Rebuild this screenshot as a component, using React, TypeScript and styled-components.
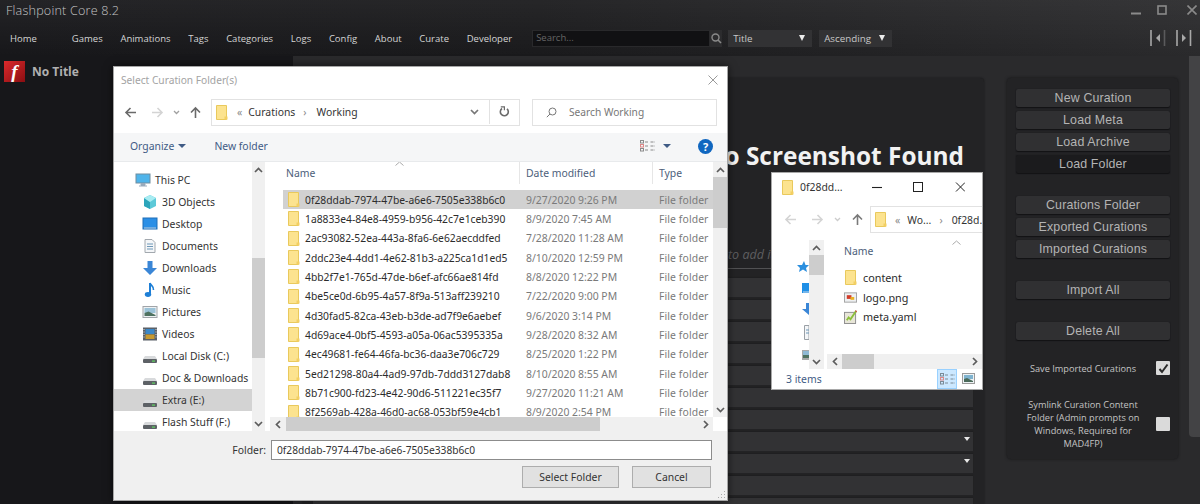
import React from "react";
import styled, { createGlobalStyle } from "styled-components";

const Global = createGlobalStyle`
  html, body { margin: 0; padding: 0; background: #1a1a1c; }
  * { box-sizing: border-box; }
`;
const UI = `"Open Sans", "Noto Sans", sans-serif`;
const WIN = `"Noto Sans", "Open Sans", sans-serif`;

const Page = styled.div`
  position: relative; width: 1200px; height: 504px; overflow: hidden;
  display: flex; flex-direction: column; background: #1a1a1c; font-family: ${UI};
`;
const Header = styled.header`
  height: 56px; flex: none; display: flex; flex-direction: column;
  background: linear-gradient(to bottom, rgba(255,255,255,.055), rgba(255,255,255,0)),
    linear-gradient(to right, #17171a 0%, #1a1a1c 45%, #2a2a2c 100%);
`;
const TitleBar = styled.div`display: flex; align-items: center; height: 20px; padding: 0 3px 0 6px;`;
const AppTitle = styled.div`font-size: 12.6px; font-weight: 300; color: #c4c4c4; letter-spacing: .2px; flex: 1;`;
const WinCtl = styled.svg<{ $ml: number }>`display: block; margin-left: ${p => p.$ml}px; color: #8a8a8a;`;
const NavBar = styled.nav`display: flex; align-items: center; height: 36px; padding: 0 8px 0 10px;`;
const NavLink = styled.a`
  font-size: 9.5px; color: #d4d4d4; margin-right: 17.7px;
  &:first-child { margin-right: 35px; }
  &:nth-last-of-type(1) { margin-right: 20px; }
`;
const SearchBox = styled.div`
  width: 178px; height: 17px; background: #111113; border: 1px solid #29292b;
  font-size: 9.5px; color: #666; padding-left: 3px; line-height: 14px;
`;
const SearchBtn = styled.div`width: 12px; height: 17px; background: #2c2c2e; display: flex; align-items: center; justify-content: center; margin-right: 6px;`;
const Select = styled.div<{ $w: number }>`
  width: ${p => p.$w}px; height: 17px; background: #323234; color: #c8c8c8; font-size: 9.8px;
  display: flex; align-items: center; justify-content: space-between; padding: 0 7px 0 5px; margin-right: 7px;
`;
const Arrow = styled.span`
  width: 0; height: 0; border-left: 3px solid transparent; border-right: 3px solid transparent;
  border-top: 6px solid #ececec; flex: none;
`;
const LayoutBtns = styled.div`margin-left: auto; display: flex; gap: 10px; margin-right: 0;`;
const Body = styled.div`flex: 1; display: flex; min-height: 0;`;
const Sidebar = styled.aside`width: 293px; flex: none; background: #17171a; padding: 5px 4px; display: block;`;
const SideHead = styled.div`display: flex; align-items: center; gap: 7px;`;
const FlashLogo = styled.div`
  width: 21px; height: 21px; background: linear-gradient(135deg, #dc2a2c, #8a0e12); color: #fff;
  display: flex; align-items: center; justify-content: center;
  font: italic bold 19px "Liberation Serif", serif; line-height: 21px;
`;
const SideTitle = styled.div`font-size: 12px; font-weight: 700; color: #b0b0b0;`;
const Content = styled.main`flex: 1; display: flex; background: #2a2a2c; padding-top: 22px; min-width: 0;`;
const Panel = styled.section`
  width: 681px; margin-left: 10px; margin-right: 23px; flex: none; background: #232325;
  border-radius: 4px 4px 0 0; box-shadow: 0 0 2px #151517; display: flex; flex-direction: column; padding: 0 11px 0 10px;
`;
const Shot = styled.div`height: 200px; flex: none; display: flex; flex-direction: column; align-items: flex-end;`;
const NoShot = styled.h2`
  margin: 58px 9px 0 0; font-size: 24.4px; line-height: 40px; font-weight: 700; color: #f2f2f2; white-space: nowrap; font-family: ${UI};
`;
const DropHint = styled.div`
  margin-top: 70px; width: 245px; font-size: 12.5px; font-style: italic; color: #5f5f61; line-height: 18px;
`;
const HintLine = styled.div`height: 1px; background: #515153; width: 100%; margin-top: 4px;`;
const Rows = styled.div`display: flex; flex-direction: column; gap: 3px;`;
const Row = styled.div`
  height: 19px; flex: none; background: #323234; box-shadow: 0 -1px 1px #1f1f21;
  display: flex; align-items: center; justify-content: flex-end; padding-right: 3px;
`;
const RowArrow = styled.span`
  width: 0; height: 0; border-left: 3px solid transparent; border-right: 3px solid transparent;
  border-top: 4px solid #e8e8e8; margin-bottom: 5px;
`;
const SidePanel = styled.section`
  width: 171px; height: 381px; flex: none; background: #232325; border-radius: 4px; box-shadow: 0 0 3px #141416;
  padding: 11px 8px 0 9px; display: flex; flex-direction: column;
`;
const SideBtn = styled.button<{ $dark?: boolean; $gap?: boolean }>`
  display: block; width: 154px; height: 18px; margin: ${p => (p.$gap ? "19px" : "0")} 0 4px; padding: 0; flex: none;
  border: 0; border-radius: 2px; background: ${p => (p.$dark ? "#1b1b1d" : "#303032")};
  box-shadow: 0 1px 1px #121214, 0 0 1px #17171a; color: #b4b4b4;
  font: 12.4px/18px "Liberation Sans", sans-serif; letter-spacing: .15px;
`;
const CheckRow = styled.div<{ $mt: number }>`display: flex; align-items: center; margin-top: ${p => p.$mt}px;`;
const CheckLabel = styled.div`
  width: 134px; margin-right: 6px; text-align: center; font-size: 9.2px; line-height: 13px; color: #c4c4c4; flex: none;
`;
const Check = styled.div`
  width: 14px; height: 14px; background: #dadada; border-radius: 1px; display: flex; align-items: center; justify-content: center;
`;
const PageScroll = styled.div`margin-left: 11px; width: 11px; height: 381px; margin-top: -22px; background: #434345; border-radius: 0 0 0 4px; flex: none;`;

/* windows */
const Dialog = styled.div`
  position: absolute; left: 113px; top: 66px; width: 615px; height: 435px; background: #fff;
  border: 1px solid #a6a6a6; display: flex; flex-direction: column; font-family: ${WIN}; box-shadow: 0 0 8px rgba(0,0,0,.6);
`;
const DlgTitle = styled.div`
  height: 28px; flex: none; display: flex; align-items: center; justify-content: space-between; padding: 0 9px 2px 7px;
  font-size: 10.2px; color: #a3a3a3;
`;
const AddrRow = styled.div`height: 38px; flex: none; display: flex; padding-top: 4px; padding-left: 10px;`;
const NavIcons = styled.div`width: 87px; flex: none; height: 27px; display: flex; align-items: center; gap: 0;`;
const AddrBox = styled.div<{ $w: number }>`
  width: ${p => p.$w}px; height: 27px; border: 1px solid #e2e2e2; display: flex; align-items: center; flex: none; font-size: 10.4px; color: #333; padding-bottom: 1px;
`;
const Crumb = styled.span<{ $ml?: number }>`margin-left: ${p => p.$ml ?? 0}px; white-space: nowrap;`;
const Faint = styled.span<{ $ml?: number }>`margin-left: ${p => p.$ml ?? 0}px; color: #8a8a8a; white-space: nowrap;`;
const AddrChevron = styled.div`margin-left: auto; padding-right: 10px; display: flex; align-items: center;`;
const AddrEnd = styled.div`width: 30px; height: 100%; border-left: 1px solid #e2e2e2; display: flex; align-items: center; justify-content: center;`;
const SearchField = styled.div`
  margin-left: 12px; width: 185px; height: 27px; border: 1px solid #e2e2e2; display: flex; align-items: center; padding-left: 13px; gap: 12px;
  font-size: 10.2px; color: #777; padding-bottom: 1px;
`;
const Tools = styled.div`
  height: 29px; flex: none; background: #f5f6f7; border-bottom: 1px solid #e8eaec; display: flex; align-items: center; padding: 0 14px 2px 16px;
  font-size: 10.4px; color: #3f5b85;
`;
const ToolCaret = styled.span<{ $ml: number; $color?: string }>`
  margin-left: ${p => p.$ml}px; width: 0; height: 0; border-left: 4px solid transparent; border-right: 4px solid transparent;
  border-top: 4px solid ${p => p.$color ?? "#3f5b85"};
`;
const NewFolder = styled.span`margin-left: 28px; flex: 1;`;
const Help = styled.div`
  margin-left: 27px; width: 15px; height: 15px; border-radius: 50%; background: #1067c0; color: #fff;
  font: 700 11px/15px ${WIN}; text-align: center;
`;
const Browser = styled.div`flex: 1; display: flex; min-height: 0;`;
const NavPane = styled.div`width: 138px; flex: none; padding-top: 7px; overflow: hidden;`;
const NavItem = styled.div<{ $active?: boolean; $top?: boolean }>`
  height: 22px; display: flex; align-items: center; padding-left: ${p => (p.$top ? 21 : 28)}px; gap: 4px;
  background: ${p => (p.$active ? "#d3d3d3" : "transparent")}; font-size: 10.4px; color: #333; white-space: nowrap;
`;
const VBar = styled.div<{ $w?: number }>`
  width: ${p => p.$w ?? 13}px; flex: none; background: #f0f0f0; display: flex; flex-direction: column; align-items: stretch; position: relative;
`;
const Thumb = styled.div<{ $h: number; $mt: number }>`height: ${p => p.$h}px; margin-top: ${p => p.$mt}px; background: #cdcdcd; flex: none;`;
const Chev = styled.svg`display: block; flex: none;`;
const ChevSlot = styled.div<{ $h?: number }>`height: ${p => p.$h ?? 15}px; display: flex; align-items: center; justify-content: center; flex: none;`;
const Push = styled.div`flex: 1;`;
const FilePane = styled.div`
  margin-left: 5px; flex: 1; display: grid; grid-template-columns: 1fr 14px; grid-template-rows: 1fr 14px; min-width: 0;
`;
const ListArea = styled.div`overflow: hidden; min-height: 0; padding-left: 13px;`;
const ColHead = styled.div`height: 28px; display: flex; font-size: 10.4px; color: #4c607a; position: relative;`;
const HeadCell = styled.div<{ $w?: number; $ml?: number; $line?: boolean }>`
  width: ${p => (p.$w ? `${p.$w}px` : "auto")}; padding-left: ${p => p.$ml ?? 0}px; line-height: 22px; height: 22px;
  border-right: ${p => (p.$line ? "1px solid #e6e6e6" : "0")};
`;
const SortCaret = styled.svg`position: absolute; left: 112px; top: -1px;`;
const FileRow = styled.div<{ $sel?: boolean }>`
  height: 19.33px; display: flex; align-items: center; background: ${p => (p.$sel ? "#d1d1d1" : "transparent")};
  font-size: 10.4px; color: #2c2c2c; white-space: nowrap;
`;
const FileName = styled.div`width: 243px; flex: none; display: flex; align-items: center; gap: 5px; padding-left: 5px; font-size: 10.3px;`;
const FileDate = styled.div`width: 133px; flex: none; color: #7a7a7a;`;
const FileType = styled.div`color: #7a7a7a; letter-spacing: .1px;`;
const HBar = styled.div<{ $h?: number }>`background: #f0f0f0; display: flex; align-items: center; height: ${p => p.$h ?? 14}px;`;
const HThumb = styled.div<{ $w: number; $ml?: number }>`height: 100%; width: ${p => p.$w}px; margin-left: ${p => p.$ml ?? 0}px; background: #cdcdcd; flex: none;`;
const Slot = styled.div<{ $w?: number }>`width: ${p => p.$w ?? 15}px; height: 14px; display: flex; align-items: center; justify-content: center; flex: none;`;
const Footer = styled.div`
  height: 69px; flex: none; background: #f0f0f0; padding-top: 9px; position: relative;
`;
const FolderRow = styled.div`display: flex; align-items: center; justify-content: flex-end; padding-right: 15px; gap: 5px; font-size: 10.4px; color: #333;`;
const FolderInput = styled.div`
  width: 441px; height: 20px; background: #fff; border: 1px solid #8c8c8c; font-size: 10.2px; line-height: 18px; padding-left: 5px; color: #333;
`;
const BtnRow = styled.div`display: flex; justify-content: flex-end; gap: 13px; padding-right: 16px; margin-top: 6px;`;
const WinBtn = styled.div<{ $w: number }>`
  width: ${p => p.$w}px; height: 22px; border: 1px solid #adadad; background: #e1e1e1; font-size: 10.4px; line-height: 20px; text-align: center; color: #333;
`;
const Grip = styled.svg`position: absolute; right: 1px; bottom: 1px;`;

const Explorer = styled.div`
  position: absolute; left: 771px; top: 172px; width: 212px; height: 218px; background: #fff; border: 1px solid #a8a8a8;
  display: flex; flex-direction: column; font-family: ${WIN}; overflow: hidden;
`;
const ExTitle = styled.div`height: 33px; flex: none; display: flex; align-items: center; padding: 0 0 5px 10px; font-size: 10.4px; color: #333; gap: 6px;`;
const ExTitleText = styled.span`flex: 1;`;
const ExNav = styled.div`height: 27px; flex: none; display: flex; align-items: center; padding-left: 12px;`;
const ExAddr = styled.div`
  margin-left: 6px; flex: 1; height: 27px; border: 1px solid #e2e2e2; border-right: 0; display: flex; align-items: center; padding-left: 4px; font-size: 10.4px; color: #333; white-space: nowrap; overflow: hidden;
`;
const ExBody = styled.div`flex: 1; display: flex; min-height: 0; padding-top: 7px;`;
const ExClip = styled.div`width: 37px; flex: none; overflow: hidden; display: flex; flex-direction: column; align-items: flex-end; padding-top: 21px; gap: 10px;`;
const ExFiles = styled.div`flex: 1; margin-left: 3px; display: flex; flex-direction: column; min-width: 0; position: relative;`;
const ExHead = styled.div`height: 28px; padding-left: 17px; padding-top: 2px; line-height: 18px; font-size: 10.4px; color: #4c607a;`;
const ExRow = styled.div`height: 19.5px; display: flex; align-items: center; gap: 6px; padding-left: 18px; font-size: 10.8px; color: #2c2c2c;`;
const ExCaret = styled.svg`position: absolute; top: 0; left: 125px;`;
const ExStatus = styled.div`height: 20px; flex: none; display: flex; align-items: center; padding: 0 0 1px 14px; font-size: 10.4px; color: #3f5b85;`;
const ViewBtn = styled.div<{ $on?: boolean }>`
  width: 20px; height: 20px; margin-left: ${p => (p.$on ? "auto" : "1px")}; margin-right: ${p => (p.$on ? "0" : "4px")};
  background: ${p => (p.$on ? "#cce8ff" : "transparent")}; border: 1px solid ${p => (p.$on ? "#99d1ff" : "transparent")};
  display: flex; align-items: center; justify-content: center;
`;

const Folder = ({ s = 1 }: { s?: number }) => (
  <svg width={12 * s} height={15 * s} viewBox="0 0 12 15" style={{ flex: "none", display: "block" }}>
    <path d="M.5.5H10.5V14.5H.5Z" fill="#fce38f" stroke="#e9c95c" />
    <path d="M8.5 11.5h3v3h-3z" fill="#f3cf62" />
  </svg>
);
const ChevronUp = ({ c = "#5c5c5c" }: { c?: string }) => (
  <Chev width="9" height="6" viewBox="0 0 9 6"><path d="M1 5 4.5 1.5 8 5" fill="none" stroke={c} strokeWidth="1.7" /></Chev>
);
const ChevronDown = ({ c = "#5c5c5c" }: { c?: string }) => (
  <Chev width="9" height="6" viewBox="0 0 9 6"><path d="M1 1 4.5 4.5 8 1" fill="none" stroke={c} strokeWidth="1.7" /></Chev>
);
const ChevronLeft = () => (
  <Chev width="6" height="9" viewBox="0 0 6 9"><path d="M5 1 1.5 4.5 5 8" fill="none" stroke="#5c5c5c" strokeWidth="1.7" /></Chev>
);
const ChevronRight = () => (
  <Chev width="6" height="9" viewBox="0 0 6 9"><path d="M1 1 4.5 4.5 1 8" fill="none" stroke="#5c5c5c" strokeWidth="1.7" /></Chev>
);
const NavArrow = ({ dir, c, ml = 0 }: { dir: "l" | "r" | "u"; c: string; ml?: number }) => {
  const d = dir === "l" ? "M12 6.5H2M6.5 2 2 6.5 6.5 11" : dir === "r" ? "M1 6.5H11M6.5 2 11 6.5 6.5 11" : "M6.5 12V2M2 6.5 6.5 2 11 6.5";
  return (
    <svg width="13" height="13" viewBox="0 0 13 13" style={{ marginLeft: ml, display: "block", flex: "none" }}>
      <path d={d} fill="none" stroke={c} strokeWidth="1.6" />
    </svg>
  );
};
const Glass = ({ c = "#777" }: { c?: string }) => (
  <svg width="11" height="11" viewBox="0 0 11 11" style={{ flex: "none" }}>
    <circle cx="6.5" cy="4.5" r="3.5" fill="none" stroke={c} /><path d="M4 7 .8 10.2" stroke={c} />
  </svg>
);
const Refresh = () => (
  <svg width="11" height="12" viewBox="0 0 11 12"><path d="M3 2.5a4 4 0 1 0 5 .3" fill="none" stroke="#6a6a6a" strokeWidth="1.6" /><path d="M1.8.8h3.6v3.4" fill="none" stroke="#6a6a6a" strokeWidth="1.2" /></svg>
);
const DetailsView = ({ c = "#8a8a8a" }: { c?: string }) => (
  <svg width="15" height="12" viewBox="0 0 15 12" style={{ display: "block" }}>
    <g fill="none" stroke={c}><rect x=".5" y=".5" width="3" height="2.5" /><rect x=".5" y="4.5" width="3" height="2.5" stroke="#d88" /><rect x=".5" y="8.5" width="3" height="2.5" /></g>
    <path d="M5 2h4M10.5 2H15M5 6h4M10.5 6H15M5 10h4M10.5 10H15" stroke={c} strokeDasharray="3 1" />
  </svg>
);
const PicIcon = () => (
  <svg width="13" height="11" viewBox="0 0 13 11" style={{ display: "block" }}>
    <rect x=".5" y=".5" width="12" height="10" fill="#eef3f5" stroke="#9a9a9a" />
    <path d="M2 2h9v4H2z" fill="#7fb3cf" /><path d="M2 9V6l3-1 6 3v1z" fill="#4a6a5a" />
  </svg>
);

const nav16 = { width: 16, height: 16, viewBox: "0 0 16 16", style: { flex: "none", display: "block" } as React.CSSProperties };
const PcIcon = () => (<svg {...nav16}><rect x="1" y="2" width="14" height="9" fill="#4fb4ea" stroke="#6f8da0" /><path d="M6 11.5h4v2H6zM4 14h8" fill="#9ab" stroke="#9ab" /></svg>);
const CubeIcon = () => (<svg {...nav16}><path d="M8 1 14 4v8l-6 3-6-3V4z" fill="#5cc9d8" /><path d="M8 8v7l-6-3V4z" fill="#2ca5bb" /><path d="M8 1l6 3-6 4-6-4z" fill="#a8ecf2" /></svg>);
const DesktopIcon = () => (<svg {...nav16}><rect x="1" y="2" width="14" height="11" fill="#2a8fe6" stroke="#1f6fb8" /><path d="M2 12h12" stroke="#bcd" /></svg>);
const DocsIcon = () => (<svg {...nav16}><path d="M3 1.5h7l3 3v10H3z" fill="#f4f6f8" stroke="#a2a8ae" /><path d="M5 6h6M5 8.5h6M5 11h6" stroke="#6f98b8" /></svg>);
const DownIcon = () => (<svg {...nav16}><path d="M5.5 1h5v7H15l-7 7-7-7h4.5z" fill="#3a86d6" /></svg>);
const MusicIcon = () => (<svg {...nav16}><path d="M8 1v10.5" stroke="#1e7fd6" strokeWidth="2" /><ellipse cx="6" cy="12.5" rx="3.2" ry="2.4" fill="#1e7fd6" /><path d="M8 1c1 3 4 3 3.5 7" fill="none" stroke="#1e7fd6" strokeWidth="1.6" /></svg>);
const PicsIcon = () => (<svg {...nav16}><rect x="1" y="2.5" width="14" height="11" fill="#eef1f3" stroke="#a0a4a8" /><path d="M2.5 4h11v5h-11z" fill="#9cc3d8" /><path d="M2.5 12V9l4-1.5 7 3.5v1z" fill="#4f7260" /></svg>);
const VideoIcon = () => (<svg {...nav16}><rect x="1" y="1.5" width="14" height="13" fill="#5a6068" /><rect x="3.5" y="3" width="9" height="5" fill="#3c88c8" /><rect x="3.5" y="8.5" width="9" height="4.5" fill="#c89a30" /><path d="M2 3v10M14 3v10" stroke="#ddd" strokeDasharray="1 1.5" /></svg>);
const DiskIcon = () => (<svg {...nav16} style={{ flex: "none", display: "block", marginTop: 3 }}><path d="M3 6h10l2 3H1z" fill="#d8dadc" /><rect x="1" y="9" width="14" height="4" rx="1" fill="#5d6166" /><rect x="10" y="10.5" width="3" height="1.2" fill="#5fd35f" /></svg>);

const files = [
  ["0f28ddab-7974-47be-a6e6-7505e338b6c0", "9/27/2020 9:26 PM"],
  ["1a8833e4-84e8-4959-b956-42c7e1ceb390", "8/9/2020 7:45 AM"],
  ["2ac93082-52ea-443a-8fa6-6e62aecddfed", "7/28/2020 11:28 AM"],
  ["2ddc23e4-4dd1-4e62-81b3-a225ca1d1ed5", "8/10/2020 12:59 PM"],
  ["4bb2f7e1-765d-47de-b6ef-afc66ae814fd", "8/8/2020 12:22 PM"],
  ["4be5ce0d-6b95-4a57-8f9a-513aff239210", "7/22/2020 9:00 PM"],
  ["4d30fad5-82ca-43eb-b3de-ad7f9e6aebef", "9/6/2020 3:14 PM"],
  ["4d69ace4-0bf5-4593-a05a-06ac5395335a", "9/28/2020 8:32 AM"],
  ["4ec49681-fe64-46fa-bc36-daa3e706c729", "8/25/2020 1:22 PM"],
  ["5ed21298-80a4-4ad9-97db-7ddd3127dab8", "8/10/2020 8:55 AM"],
  ["8b71c900-fd23-4e42-90d6-511221ec35f7", "9/27/2020 11:21 AM"],
  ["8f2569ab-428a-46d0-ac68-053bf59e4cb1", "8/9/2020 2:54 PM"],
];
const navItems: [string, React.ReactNode][] = [
  ["3D Objects", <CubeIcon />], ["Desktop", <DesktopIcon />], ["Documents", <DocsIcon />], ["Downloads", <DownIcon />],
  ["Music", <MusicIcon />], ["Pictures", <PicsIcon />], ["Videos", <VideoIcon />], ["Local Disk (C:)", <DiskIcon />],
  ["Doc & Downloads", <DiskIcon />], ["Extra (E:)", <DiskIcon />], ["Flash Stuff (F:)", <DiskIcon />],
];
const menu = ["Home", "Games", "Animations", "Tags", "Categories", "Logs", "Config", "About", "Curate", "Developer"];

export default function App() {
  return (
    <Page>
      <Global />
      <Header>
        <TitleBar>
          <AppTitle>Flashpoint Core 8.2</AppTitle>
          <WinCtl $ml={0} width="10" height="10" viewBox="0 0 10 10"><path d="M0 8.5H10" stroke="currentColor" strokeWidth="2" /></WinCtl>
          <WinCtl $ml={16} width="10" height="10" viewBox="0 0 10 10"><rect x="1" y="1" width="8" height="8" fill="none" stroke="currentColor" strokeWidth="1.6" /></WinCtl>
          <WinCtl $ml={20} width="10" height="10" viewBox="0 0 10 10"><path d="M.5.5 9.5 9.5M9.5.5 .5 9.5" stroke="currentColor" strokeWidth="1.6" /></WinCtl>
        </TitleBar>
        <NavBar>
          {menu.map(m => <NavLink key={m}>{m}</NavLink>)}
          <SearchBox>Search...</SearchBox>
          <SearchBtn><svg width="11" height="11" viewBox="0 0 11 11"><circle cx="4.5" cy="4.5" r="3.5" fill="none" stroke="#8a8a8a" strokeWidth="1.4" /><path d="M7 7l3 3" stroke="#8a8a8a" strokeWidth="1.6" /></svg></SearchBtn>
          <Select $w={84}>Title<Arrow /></Select>
          <Select $w={73}>Ascending<Arrow /></Select>
          <LayoutBtns>
            <svg width="16" height="16" viewBox="0 0 16 16"><path d="M1 0v16" stroke="#a8a8a8" strokeWidth="1.6" /><path d="M10 4v8L6 8z" fill="#a8a8a8" /><path d="M14.5 0v16" stroke="#5a5a5c" strokeWidth="1.6" /></svg>
            <svg width="16" height="16" viewBox="0 0 16 16"><path d="M1 0v16" stroke="#a8a8a8" strokeWidth="1.6" /><path d="M6 4v8l4-4z" fill="#a8a8a8" /><path d="M14.5 0v16" stroke="#a8a8a8" strokeWidth="1.6" /></svg>
          </LayoutBtns>
        </NavBar>
      </Header>
      <Body>
        <Sidebar>
          <SideHead><FlashLogo>f</FlashLogo><SideTitle>No Title</SideTitle></SideHead>
        </Sidebar>
        <Content>
          <Panel>
            <Shot>
              <NoShot>No Screenshot Found</NoShot>
              <DropHint>to add it<HintLine /></DropHint>
            </Shot>
            <Rows>
              {Array.from({ length: 11 }).map((_, i) => (
                <Row key={i}>{i === 7 || i === 8 ? <RowArrow /> : null}</Row>
              ))}
            </Rows>
          </Panel>
          <SidePanel>
            <SideBtn>New Curation</SideBtn>
            <SideBtn>Load Meta</SideBtn>
            <SideBtn>Load Archive</SideBtn>
            <SideBtn $dark>Load Folder</SideBtn>
            <SideBtn $gap>Curations Folder</SideBtn>
            <SideBtn>Exported Curations</SideBtn>
            <SideBtn>Imported Curations</SideBtn>
            <SideBtn $gap>Import All</SideBtn>
            <SideBtn $gap>Delete All</SideBtn>
            <CheckRow $mt={17}>
              <CheckLabel>Save Imported Curations</CheckLabel>
              <Check><svg width="11" height="11" viewBox="0 0 11 11"><path d="M1.5 6 4 9 9.5 1.5" fill="none" stroke="#2a2a2a" strokeWidth="2" /></svg></Check>
            </CheckRow>
            <CheckRow $mt={23}>
              <CheckLabel>Symlink Curation Content Folder (Admin prompts on Windows, Required for MAD4FP)</CheckLabel>
              <Check />
            </CheckRow>
          </SidePanel>
          <PageScroll />
        </Content>
      </Body>

      <Dialog>
        <DlgTitle>
          Select Curation Folder(s)
          <svg width="10" height="10" viewBox="0 0 10 10"><path d="M.5.5 9.5 9.5M9.5.5 .5 9.5" stroke="#9a9a9a" /></svg>
        </DlgTitle>
        <AddrRow>
          <NavIcons>
            <NavArrow dir="l" c="#6a6a6a" />
            <NavArrow dir="r" c="#d4d4d4" ml={14} />
            <svg width="7" height="5" viewBox="0 0 7 5" style={{ marginLeft: 9 }}><path d="M1 1l2.5 2.5L6 1" fill="none" stroke="#a0a0a0" strokeWidth="1.3" /></svg>
            <NavArrow dir="u" c="#6a6a6a" ml={9} />
          </NavIcons>
          <AddrBox $w={309}>
            <Crumb $ml={4}><Folder /></Crumb>
            <Faint $ml={9}>«</Faint>
            <Crumb $ml={6}>Curations</Crumb>
            <Faint $ml={8}>›</Faint>
            <Crumb $ml={10}>Working</Crumb>
            <AddrChevron><ChevronDown c="#777" /></AddrChevron>
            <AddrEnd><Refresh /></AddrEnd>
          </AddrBox>
          <SearchField><Glass />Search Working</SearchField>
        </AddrRow>
        <Tools>
          Organize<ToolCaret $ml={4} />
          <NewFolder>New folder</NewFolder>
          <DetailsView />
          <ToolCaret $ml={8} />
          <Help>?</Help>
        </Tools>
        <Browser>
          <NavPane>
            <NavItem $top><PcIcon />This PC</NavItem>
            {navItems.map(([n, ic]) => (
              <NavItem key={n} $active={n === "Extra (E:)"}>{ic}{n}</NavItem>
            ))}
          </NavPane>
          <VBar>
            <ChevSlot><ChevronUp /></ChevSlot>
            <Thumb $h={100} $mt={81} />
            <Push />
            <ChevSlot><ChevronDown /></ChevSlot>
          </VBar>
          <FilePane>
            <ListArea>
              <ColHead>
                <HeadCell $w={237} $ml={3} $line>Name</HeadCell>
                <HeadCell $w={133} $ml={6} $line>Date modified</HeadCell>
                <HeadCell $ml={6}>Type</HeadCell>
                <SortCaret width="9" height="5" viewBox="0 0 9 5"><path d="M.5 4.5 4.5 1l4 3.5" fill="none" stroke="#aaa" /></SortCaret>
              </ColHead>
              {files.map(([n, d], i) => (
                <FileRow key={n} $sel={i === 0}>
                  <FileName><Folder />{n}</FileName>
                  <FileDate>{d}</FileDate>
                  <FileType>File folder</FileType>
                </FileRow>
              ))}
            </ListArea>
            <VBar $w={14}>
              <ChevSlot><ChevronUp /></ChevSlot>
              <Thumb $h={51} $mt={0} />
              <Push />
              <ChevSlot><ChevronDown /></ChevSlot>
            </VBar>
            <HBar>
              <Slot><ChevronLeft /></Slot>
              <HThumb $w={314} $ml={1} />
              <Push />
              <Slot><ChevronRight /></Slot>
            </HBar>
          </FilePane>
        </Browser>
        <Footer>
          <FolderRow>Folder:<FolderInput>0f28ddab-7974-47be-a6e6-7505e338b6c0</FolderInput></FolderRow>
          <BtnRow><WinBtn $w={97}>Select Folder</WinBtn><WinBtn $w={79}>Cancel</WinBtn></BtnRow>
          <Grip width="9" height="9" viewBox="0 0 9 9"><path d="M7 1h1v1H7zM4 4h1v1H4zM7 4h1v1H7zM1 7h1v1H1zM4 7h1v1H4zM7 7h1v1H7z" fill="#aaa" /></Grip>
        </Footer>
      </Dialog>

      <Explorer>
        <ExTitle>
          <Folder />
          <ExTitleText>0f28dd...</ExTitleText>
          <svg width="93" height="14" viewBox="0 0 93 14" style={{ marginRight: 17 }}>
            <path d="M0 7.5H10" stroke="#222" strokeWidth="1.1" />
            <rect x="41.5" y="2.5" width="9" height="9" fill="none" stroke="#222" strokeWidth="1" />
            <path d="M84 2.5l9 9M93 2.5l-9 9" stroke="#222" strokeWidth="1" />
          </svg>
        </ExTitle>
        <ExNav>
          <NavArrow dir="l" c="#d4d4d4" />
          <NavArrow dir="r" c="#d4d4d4" ml={14} />
          <svg width="7" height="5" viewBox="0 0 7 5" style={{ marginLeft: 10 }}><path d="M1 1l2.5 2.5L6 1" fill="none" stroke="#ccc" strokeWidth="1.3" /></svg>
          <NavArrow dir="u" c="#7a7a7a" ml={10} />
          <ExAddr>
            <Folder />
            <Faint $ml={8}>«</Faint>
            <Crumb $ml={7}>Wo...</Crumb>
            <Faint $ml={8}>›</Faint>
            <Crumb $ml={9}>0f28d...</Crumb>
          </ExAddr>
        </ExNav>
        <ExBody>
          <ExClip>
            <svg width="12" height="12" viewBox="0 0 12 12" style={{ display: "block", flex: "none" }}><path d="M7 0l1.5 4H12l-3 3 1 4-4-2.5L2 11l1-4-3-3h5z" fill="#2b8fdf" /></svg>
            <svg width="7" height="10" viewBox="0 0 7 10" style={{ display: "block", flex: "none" }}><rect width="7" height="10" fill="#1f8fe6" /><path d="M1 9h6" stroke="#cde" /></svg>
            <svg width="7" height="12" viewBox="0 0 7 12" style={{ display: "block", flex: "none" }}><path d="M7 0v12L0 6h4V0z" fill="#3a86d6" /></svg>
            <svg width="5" height="15" viewBox="0 0 5 15" style={{ display: "block", flex: "none" }}><path d="M.5.5H5v14H.5z" fill="#f4f6f8" stroke="#9aa0a6" /><path d="M2 5h3M2 8h3" stroke="#6f98b8" /></svg>
            <svg width="7" height="10" viewBox="0 0 7 10" style={{ display: "block", flex: "none" }}><rect width="7" height="10" fill="#a8a8a8" /><rect x="1" y="1" width="6" height="4" fill="#8fb9d4" /><rect x="1" y="5" width="6" height="3" fill="#4f7260" /></svg>
          </ExClip>
          <VBar $w={15}>
            <ChevSlot><ChevronUp /></ChevSlot>
            <Thumb $h={20} $mt={0} />
            <Push />
            <ChevSlot><ChevronDown /></ChevSlot>
          </VBar>
          <ExFiles>
            <ExCaret width="9" height="5" viewBox="0 0 9 5"><path d="M.5 4.5 4.5 1l4 3.5" fill="none" stroke="#aaa" /></ExCaret>
            <ExHead>Name</ExHead>
            <ExRow><Folder />content</ExRow>
            <ExRow>
              <svg width="13" height="11" viewBox="0 0 14 11" style={{ display: "block", marginLeft: -1 }}><rect x=".5" y=".5" width="13" height="10" fill="#eef0f2" stroke="#a0a0a0" /><rect x="3" y="3" width="5" height="4" fill="#d23c2a" /><rect x="7" y="5" width="4" height="3" fill="#e8b020" /></svg>
              logo.png
            </ExRow>
            <ExRow>
              <svg width="13" height="14" viewBox="0 0 14 15" style={{ display: "block", marginLeft: -1 }}><rect x=".5" y="2.5" width="12" height="12" fill="#e8e6d8" stroke="#8a8a8a" /><path d="M3 11l2-3 2 2 6-9" fill="none" stroke="#8cbf3a" strokeWidth="2" /><path d="M12 0l2 1-1 2" fill="#c33" /></svg>
              meta.yaml
            </ExRow>
            <Push />
            <HBar $h={15}>
              <Slot><ChevronLeft /></Slot>
              <HThumb $w={32} />
              <Push />
              <Slot><ChevronRight /></Slot>
            </HBar>
          </ExFiles>
        </ExBody>
        <ExStatus>
          3 items
          <ViewBtn $on><DetailsView c="#7a8a96" /></ViewBtn>
          <ViewBtn><PicIcon /></ViewBtn>
        </ExStatus>
      </Explorer>
    </Page>
  );
}
